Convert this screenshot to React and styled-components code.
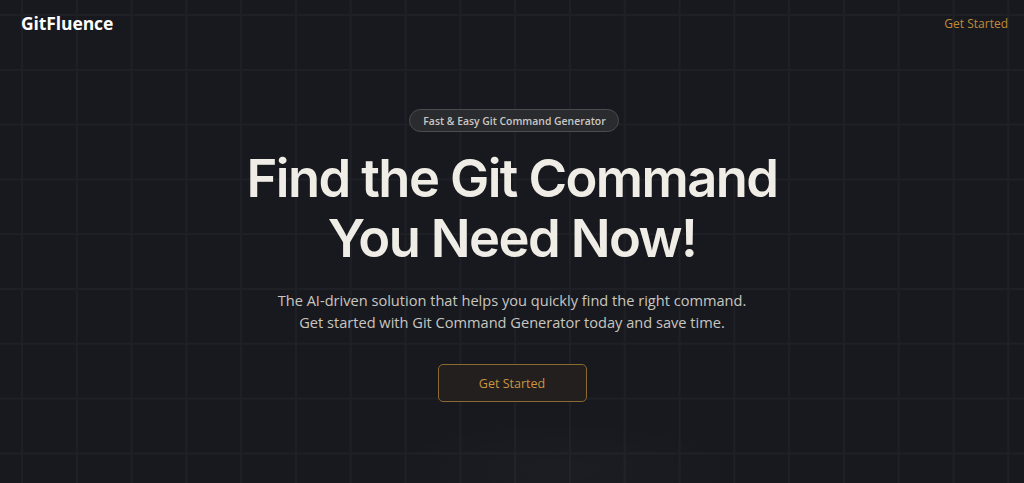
import styled, { createGlobalStyle } from 'styled-components';

const GlobalStyle = createGlobalStyle`
    html, body {
        margin: 0;
        padding: 0;
        background: #18191e;
    }
    * {
        box-sizing: border-box;
    }
`;

const Page = styled.div`
    position: relative;
    width: 100%;
    height: 483px;
    overflow: hidden;
    background-color: #18191e;
    background-image:
        radial-gradient(ellipse 260px 70px at 560px 470px, rgba(255, 255, 255, 0.02), transparent 70%),
        linear-gradient(to right, #1f2025 2px, transparent 2px),
        linear-gradient(to bottom, #1f2025 2px, transparent 2px);
    background-size: 100% 100%, 54.8px 54.8px, 54.8px 54.8px;
    background-position: 0 0, 21px 14px, 21px 14px;
    font-family: "Open Sans", "Liberation Sans", sans-serif;
    display: flex;
    flex-direction: column;
`;

const NavBar = styled.nav`
    display: flex;
    justify-content: space-between;
    align-items: center;
    height: 46px;
    padding: 0 16px 0 21px;
`;

const Logo = styled.div`
    color: #ffffff;
    font-size: 17.5px;
    font-weight: 700;
    letter-spacing: -0.1px;
`;

const NavLink = styled.a`
    color: #c08a38;
    font-size: 12px;
    cursor: pointer;
`;

const Hero = styled.main`
    display: flex;
    flex-direction: column;
    align-items: center;
    padding-top: 63px;
`;

const Badge = styled.div`
    display: flex;
    align-items: center;
    height: 23px;
    padding: 0 12px 0 13px;
    border-radius: 999px;
    background: #2a2b2f;
    border: 1px solid #4b4c50;
    color: #c9c8c4;
    font-size: 10.4px;
    font-weight: 600;
    transform: translateX(2px);
`;

const Title = styled.h1`
    margin: 16px 0 0;
    font-family: Inter, "Liberation Sans", sans-serif;
    font-weight: 600;
    font-size: 52.5px;
    line-height: 60px;
    letter-spacing: -1.6px;
    color: #efede6;
    text-align: center;
`;

const Subtitle = styled.p`
    margin: 22px 0 0;
    font-size: 14.6px;
    line-height: 21.5px;
    color: #c8c6c0;
    text-align: center;
`;

const CtaButton = styled.button`
    margin-top: 31px;
    width: 149px;
    height: 38px;
    border-radius: 5px;
    border: 1px solid #8a6a2e;
    background: #231f1e;
    color: #c89540;
    font-family: "Open Sans", "Liberation Sans", sans-serif;
    font-size: 12.5px;
    cursor: pointer;
`;

const App = () => {
    return (
        <>
            <GlobalStyle />
            <Page>
                <NavBar>
                    <Logo>GitFluence</Logo>
                    <NavLink>Get Started</NavLink>
                </NavBar>
                <Hero>
                    <Badge>Fast &amp; Easy Git Command Generator</Badge>
                    <Title>
                        Find the Git Command
                        <br />
                        You Need Now!
                    </Title>
                    <Subtitle>
                        The AI-driven solution that helps you quickly find the right command.
                        <br />
                        Get started with Git Command Generator today and save time.
                    </Subtitle>
                    <CtaButton>Get Started</CtaButton>
                </Hero>
            </Page>
        </>
    );
};

export default App;
